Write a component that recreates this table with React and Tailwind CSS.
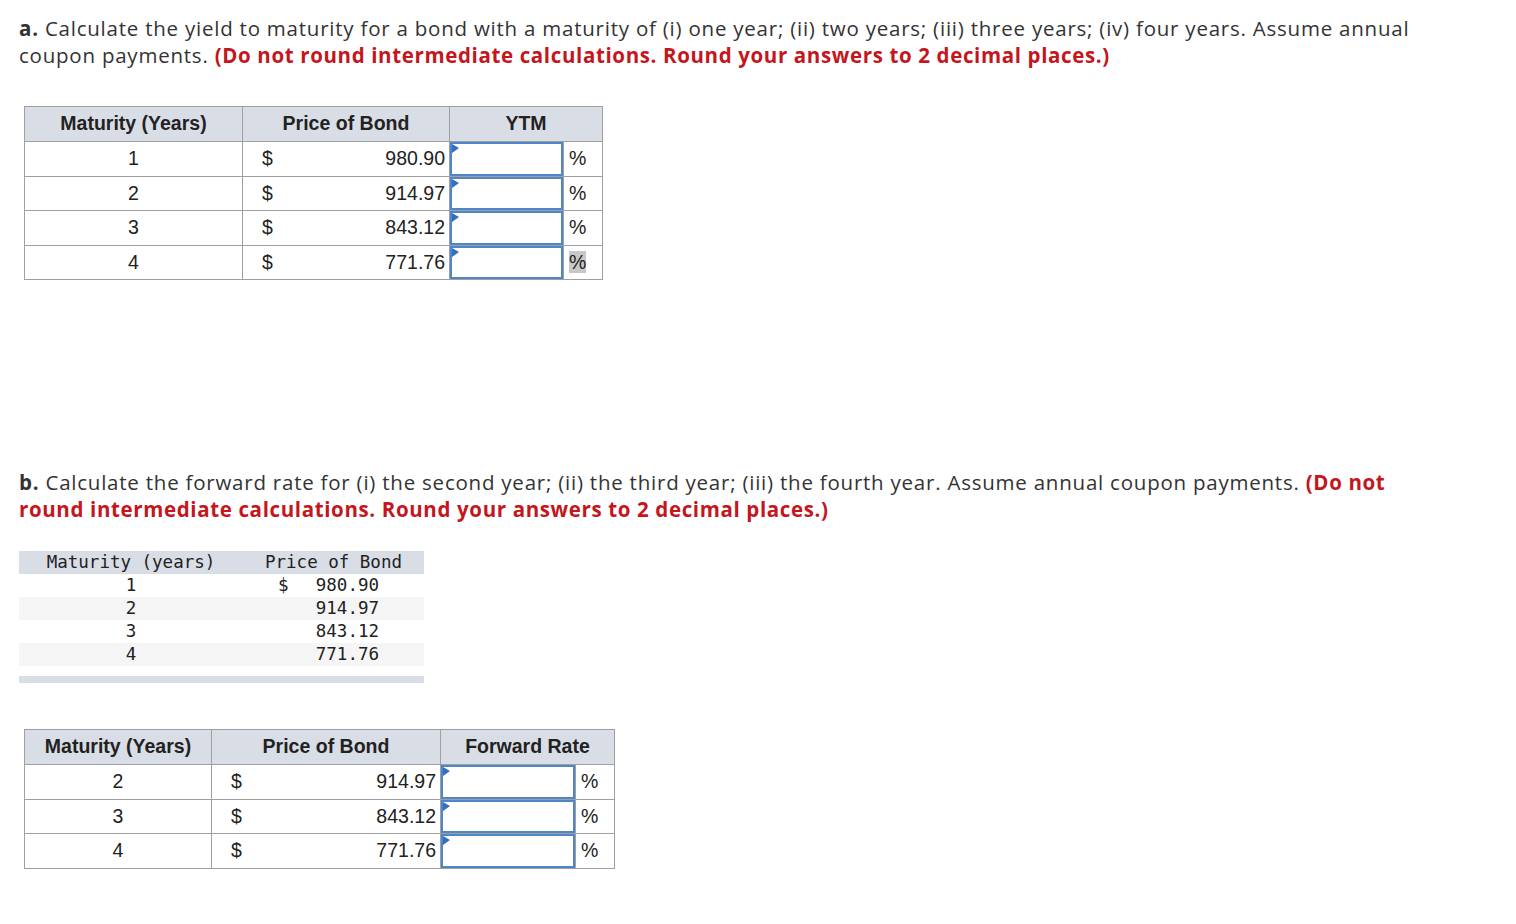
import React from 'react';

const sans = { fontFamily: '"Liberation Sans", Arial, sans-serif' };

function Corner() {
  // little blue flag in the top-left of each answer box
  return (
    <svg className="absolute left-[0px] top-[0px]" width="7" height="9" viewBox="0 0 7 9">
      <path d="M0 0 L7 4 L0 9 Z" fill="#2f6fc4" />
    </svg>
  );
}

function AnswerBox() {
  return (
    <div className="relative h-full w-full border-2 border-[#4f86c9] bg-white">
      <Corner />
    </div>
  );
}

function QuizTable({ cols, label, rows, highlightLast }) {
  return (
    <table className="border-collapse text-[19.5px] text-[#222]" style={sans}>
      <thead>
        <tr className="h-[35px] bg-[#d9dde6]">
          <th className="border border-[#a0a0a0] font-bold" style={{ width: cols[0] }}>Maturity (Years)</th>
          <th className="border border-[#a0a0a0] font-bold" style={{ width: cols[1] }}>Price of Bond</th>
          <th colSpan={2} className="border border-[#a0a0a0] font-bold" style={{ width: cols[2] + cols[3] }}>{label}</th>
        </tr>
      </thead>
      <tbody>
        {rows.map((r, i) => (
          <tr key={r[0]} className="h-[34.5px]">
            <td className="border border-[#a0a0a0] text-center">{r[0]}</td>
            <td className="border border-[#a0a0a0] pl-[19px] pr-[4px]">
              <div className="flex justify-between">
                <span>$</span>
                <span>{r[1]}</span>
              </div>
            </td>
            <td className="h-[34.5px] border border-[#a0a0a0] p-0" style={{ width: cols[2] }}>
              <AnswerBox />
            </td>
            <td className="border border-[#a0a0a0] pl-[5px]" style={{ width: cols[3] }}>
              <span className={highlightLast && i === rows.length - 1 ? 'bg-[#c8c8c8]' : ''}>%</span>
            </td>
          </tr>
        ))}
      </tbody>
    </table>
  );
}

const prices = [
  ['1', '980.90'],
  ['2', '914.97'],
  ['3', '843.12'],
  ['4', '771.76'],
];

export default function App() {
  const para = 'text-[20.5px] leading-[27px] text-[#333] tracking-[0.77px]';
  const font = { fontFamily: '"Open Sans", Lato, sans-serif' };
  const red = 'font-bold text-[#c4161c] tracking-[0.63px]';
  const mono = { fontFamily: '"DejaVu Sans Mono", "Liberation Mono", monospace' };

  return (
    <div className="min-h-[924px] w-[1516px] bg-white pl-[19px] pt-[15px]">
      <p className={para} style={font}>
        <b>a.</b> Calculate the yield to maturity for a bond with a maturity of (i) one year; (ii) two years; (iii) three years; (iv) four years. Assume annual
        <br />
        coupon payments. <span className={red}>(Do not round intermediate calculations. Round your answers to 2 decimal places.)</span>
      </p>

      <div className="ml-[5px] mt-[37px]">
        <QuizTable cols={[218, 207, 114, 39]} label="YTM" rows={prices} highlightLast />
      </div>

      <p className={`${para} mt-[189px]`} style={font}>
        <b>b.</b> Calculate the forward rate for (i) the second year; (ii) the third year; (iii) the fourth year. Assume annual coupon payments. <span className={red}>(Do not</span>
        <br />
        <span className={red}>round intermediate calculations. Round your answers to 2 decimal places.)</span>
      </p>

      <div className="mt-[28px] w-[405px] text-[17.5px] text-[#222]" style={mono}>
        <div className="flex h-[23px] items-center bg-[#d9dde6]">
          <span className="w-[224px] text-center">Maturity (years)</span>
          <span className="w-[181px] text-center">Price of Bond</span>
        </div>
        {prices.map((r, i) => (
          <div key={r[0]} className={`flex h-[23px] items-center ${i % 2 ? 'bg-[#f5f5f5]' : 'bg-white'}`}>
            <span className="w-[224px] text-center">{r[0]}</span>
            <span className="w-[35px] pl-[35px]">{i === 0 ? '$' : ''}</span>
            <span className="w-[101px] text-right">{r[1]}</span>
          </div>
        ))}
        <div className="mt-[10px] h-[7px] bg-[#d9dde6]" />
      </div>

      <div className="ml-[5px] mt-[46px]">
        <QuizTable cols={[187, 229, 135, 39]} label="Forward Rate" rows={prices.slice(1)} />
      </div>
    </div>
  );
}
